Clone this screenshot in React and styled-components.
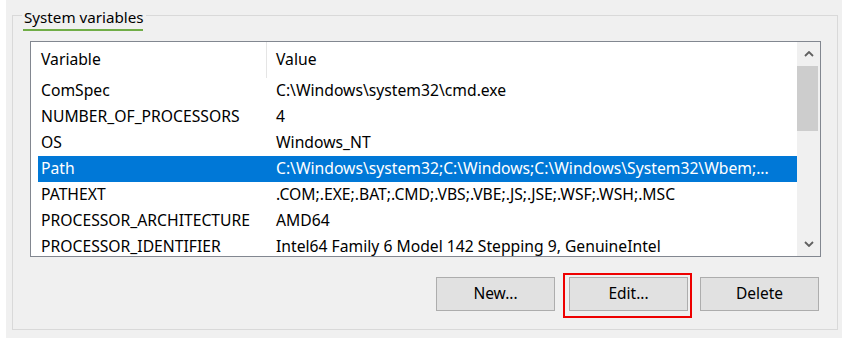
import React from "react";
import styled, { createGlobalStyle } from "styled-components";

const Global = createGlobalStyle`
  html, body { margin: 0; padding: 0; background: #ffffff; }
  body { font-family: "Noto Sans", "Open Sans", sans-serif; }
`;

const Panel = styled.div`
  margin-left: 6px;
  width: 836px;
  height: 338px;
  background: #f0f0f0;
  padding-top: 15px;
  padding-left: 6px;
  box-sizing: border-box;
`;

const Group = styled.div`
  position: relative;
  width: 826px;
  height: 315px;
  border: 1px solid #d9d9d9;
  box-sizing: border-box;
  padding: 25px 16px 0 17px;
  display: flex;
  flex-direction: column;
`;

const Legend = styled.div`
  position: absolute;
  top: -9px;
  left: 9px;
  padding: 0 2px;
  background: #f0f0f0;
  font-size: 15.2px;
  line-height: 20px;
  color: #000;
  &::after {
    content: "";
    display: block;
    height: 2px;
    margin-top: 2px;
    margin-left: -1px;
    margin-right: 1px;
    background: #70ad47;
  }
`;

const ListBox = styled.div`
  width: 791px;
  height: 216px;
  border: 1px solid #828790;
  box-sizing: border-box;
  background: #fff;
  display: flex;
  overflow: hidden;
`;

const Rows = styled.div`
  flex: 1;
  padding-left: 7px;
  overflow: hidden;
`;

const Grid = styled.div`
  display: grid;
  grid-template-columns: 229px 1fr;
  height: ${(p) => p.$h}px;
  align-items: center;
  font-size: 15.7px;
  color: ${(p) => (p.$sel ? "#fff" : "#000")};
  background: ${(p) => (p.$sel ? "#0078d7" : "transparent")};
  white-space: nowrap;
`;

const Cell = styled.div`
  padding-left: ${(p) => (p.$second ? 9 : 3)}px;
  overflow: hidden;
  height: 100%;
  display: flex;
  align-items: center;
  padding-bottom: 2px;
  box-sizing: border-box;
  border-right: ${(p) => (p.$divider ? "1px solid #e5e5e5" : "none")};
`;

const ScrollBar = styled.div`
  width: 23px;
  background: #f0f0f0;
  display: flex;
  flex-direction: column;
`;

const Arrow = styled.div`
  height: 24px;
  display: flex;
  align-items: center;
  justify-content: center;
`;

const Track = styled.div`
  flex: 1;
  padding-right: 2px;
  display: flex;
  flex-direction: column;
`;

const Thumb = styled.div`
  height: 65px;
  background: #cdcdcd;
`;

const ButtonRow = styled.div`
  display: flex;
  justify-content: flex-end;
  padding-top: 20px;
  padding-right: 2px;
  gap: 14px;
`;

const Button = styled.button`
  position: relative;
  width: 119px;
  height: 34px;
  margin-left: ${(p) => p.$ml || 0}px;
  background: #e1e1e1;
  border: 1px solid #adadad;
  font-family: "Noto Sans", "Open Sans", sans-serif;
  font-size: 15.5px;
  color: #000;
  padding: 0 0 2px;
  ${(p) =>
    p.$marked &&
    `&::after {
      content: "";
      position: absolute;
      top: -5px; left: -7px; right: -5px; bottom: -8px;
      border: 2px solid #ee0000;
    }`}
`;

const Chevron = ({ down }) => (
  <svg width="10" height="6" viewBox="0 0 10 6">
    <path
      d={down ? "M1 1 L5 5 L9 1" : "M1 5 L5 1 L9 5"}
      fill="none"
      stroke="#606060"
      strokeWidth="1.8"
    />
  </svg>
);

const rows = [
  ["ComSpec", "C:\\Windows\\system32\\cmd.exe"],
  ["NUMBER_OF_PROCESSORS", "4"],
  ["OS", "Windows_NT"],
  ["Path", "C:\\Windows\\system32;C:\\Windows;C:\\Windows\\System32\\Wbem;..."],
  ["PATHEXT", ".COM;.EXE;.BAT;.CMD;.VBS;.VBE;.JS;.JSE;.WSF;.WSH;.MSC"],
  ["PROCESSOR_ARCHITECTURE", "AMD64"],
  ["PROCESSOR_IDENTIFIER", "Intel64 Family 6 Model 142 Stepping 9, GenuineIntel"],
];

export default function App() {
  return (
    <>
      <Global />
      <Panel>
        <Group>
          <Legend>System variables</Legend>
          <ListBox>
            <Rows>
              <Grid $h={36}>
                <Cell $divider>Variable</Cell>
                <Cell $second>Value</Cell>
              </Grid>
              {rows.map(([k, v]) => (
                <Grid key={k} $h={26} $sel={k === "Path"}>
                  <Cell>{k}</Cell>
                  <Cell $second>{v}</Cell>
                </Grid>
              ))}
            </Rows>
            <ScrollBar>
              <Arrow>
                <Chevron />
              </Arrow>
              <Track>
                <Thumb />
              </Track>
              <Arrow>
                <Chevron down />
              </Arrow>
            </ScrollBar>
          </ListBox>
          <ButtonRow>
            <Button>New...</Button>
            <Button $marked>Edit...</Button>
            <Button $ml={-2}>Delete</Button>
          </ButtonRow>
        </Group>
      </Panel>
    </>
  );
}
